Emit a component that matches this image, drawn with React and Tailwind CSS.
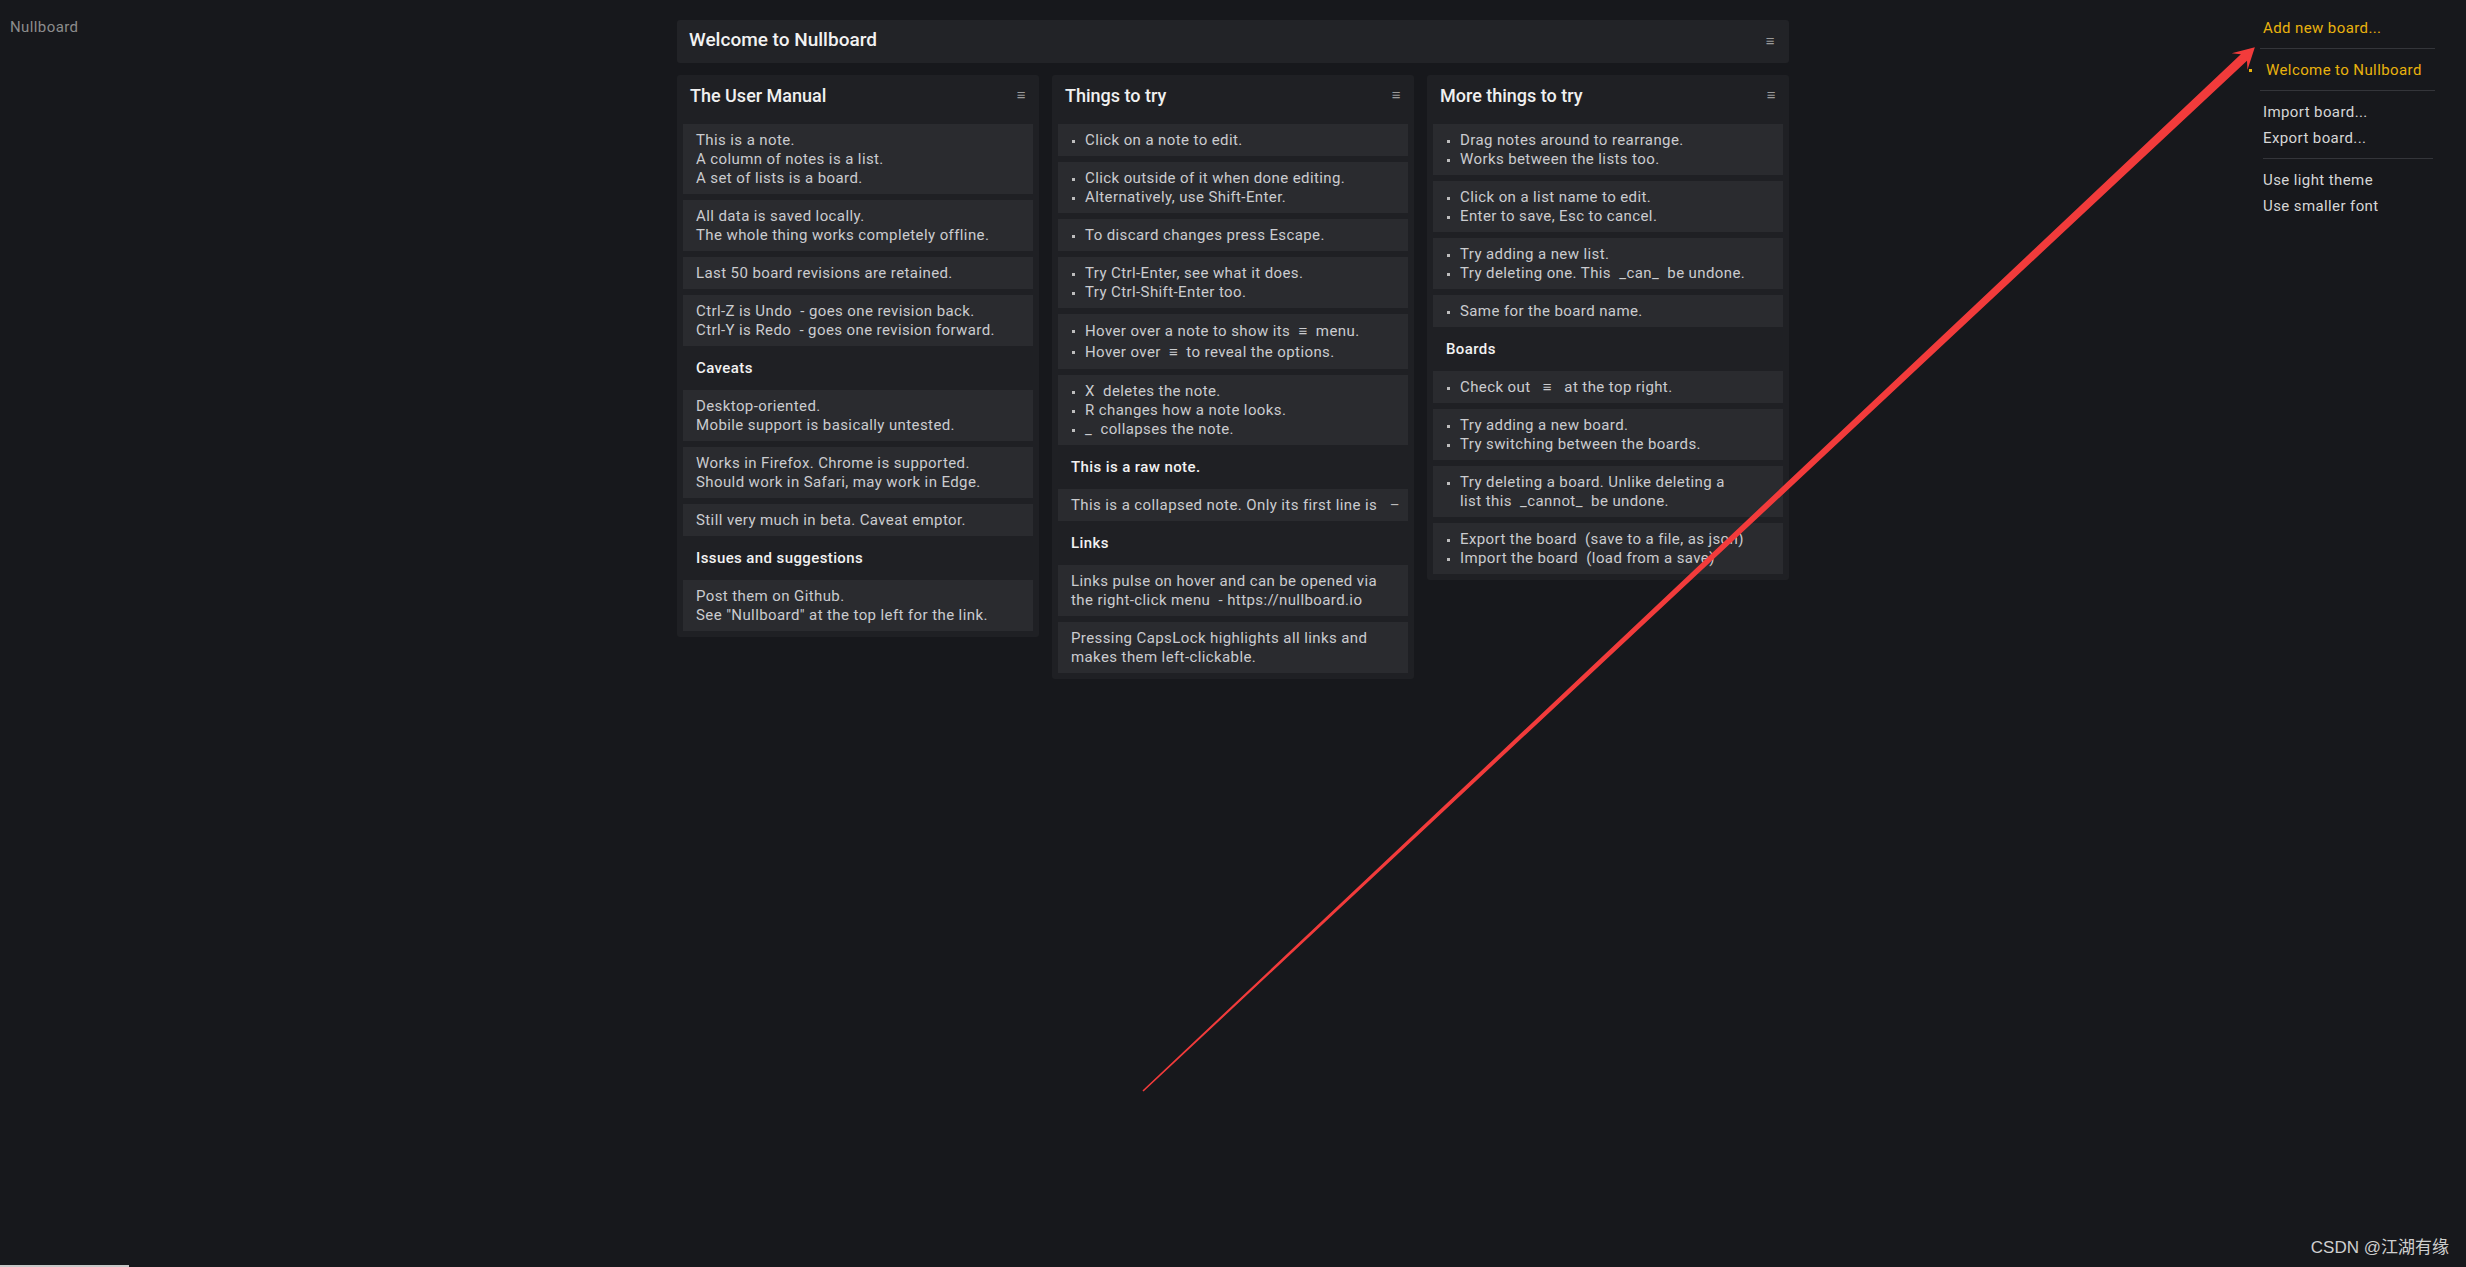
import React from "react";

// note kinds: plain text lines, bullet lines, raw (bold, no background), collapsed
const lists = [
  {
    title: "The User Manual",
    notes: [
      { lines: ["This is a note.", "A column of notes is a list.", "A set of lists is a board."] },
      { lines: ["All data is saved locally.", "The whole thing works completely offline."] },
      { lines: ["Last 50 board revisions are retained."] },
      { lines: ["Ctrl-Z is Undo  - goes one revision back.", "Ctrl-Y is Redo  - goes one revision forward."] },
      { raw: "Caveats" },
      { lines: ["Desktop-oriented.", "Mobile support is basically untested."] },
      { lines: ["Works in Firefox. Chrome is supported.", "Should work in Safari, may work in Edge."] },
      { lines: ["Still very much in beta. Caveat emptor."] },
      { raw: "Issues and suggestions" },
      { lines: ["Post them on Github.", 'See "Nullboard" at the top left for the link.'] },
    ],
  },
  {
    title: "Things to try",
    notes: [
      { bullets: ["Click on a note to edit."] },
      { bullets: ["Click outside of it when done editing.", "Alternatively, use Shift-Enter."] },
      { bullets: ["To discard changes press Escape."] },
      { bullets: ["Try Ctrl-Enter, see what it does.", "Try Ctrl-Shift-Enter too."] },
      { bullets: ["Hover over a note to show its  \u2261  menu.", "Hover over  \u2261  to reveal the options."], tall: true },
      { bullets: ["X  deletes the note.", "R changes how a note looks.", "_  collapses the note."] },
      { raw: "This is a raw note." },
      { collapsed: "This is a collapsed note. Only its first line is" },
      { raw: "Links" },
      { lines: ["Links pulse on hover and can be opened via", "the right-click menu  - https://nullboard.io"] },
      { lines: ["Pressing CapsLock highlights all links and", "makes them left-clickable."] },
    ],
  },
  {
    title: "More things to try",
    notes: [
      { bullets: ["Drag notes around to rearrange.", "Works between the lists too."] },
      { bullets: ["Click on a list name to edit.", "Enter to save, Esc to cancel."] },
      { bullets: ["Try adding a new list.", "Try deleting one. This  _can_  be undone."] },
      { bullets: ["Same for the board name."] },
      { raw: "Boards" },
      { bullets: ["Check out   \u2261   at the top right."] },
      { bullets: ["Try adding a new board.", "Try switching between the boards."] },
      { bullets: ["Try deleting a board. Unlike deleting a\nlist this  _cannot_  be undone."] },
      { bullets: ["Export the board  (save to a file, as json)", "Import the board  (load from a save)"] },
    ],
  },
];

function Note({ note }) {
  if (note.raw) {
    return (
      <div className="px-[13px] py-[6.5px] leading-[19px] font-medium text-[#f2f2f2]">
        {note.raw}
      </div>
    );
  }
  if (note.collapsed) {
    return (
      <div className="flex items-center justify-between bg-[#2a2b2f] pl-[13px] pr-[8px] py-[6.5px] leading-[19px] text-[#cbcccf]">
        <span className="whitespace-nowrap">{note.collapsed}</span>
        <span className="text-[#bbbbbb]">–</span>
      </div>
    );
  }
  return (
    <div className="bg-[#2a2b2f] px-[13px] py-[6.5px] leading-[19px] text-[#cbcccf]">
      {note.lines &&
        note.lines.map((l, i) => (
          <div key={i} className="whitespace-pre">
            {l}
          </div>
        ))}
      {note.bullets &&
        note.bullets.map((l, i) => (
          <div key={i} className={`flex items-start ${note.tall ? "leading-[21px]" : ""}`}>
            <span className="w-[14px] shrink-0 pt-[9px]">
              <span className="block ml-[1px] w-[3px] h-[3px] bg-[#bdbdbd]" />
            </span>
            <span className="whitespace-pre">{l}</span>
          </div>
        ))}
    </div>
  );
}

function List({ list }) {
  return (
    <div className="w-[362px] bg-[#1f2024] rounded-[3px] px-[6px] pt-[7px] pb-[6px]">
      <div className="h-[26px] mb-[16px] flex items-center justify-between px-[7px]">
        <span className="text-[18px] font-medium tracking-normal text-[#f0f0f0]">{list.title}</span>
        <span className="text-[15px] text-[#9a9a9a]">≡</span>
      </div>
      <div className="flex flex-col gap-[6px]">
        {list.notes.map((n, i) => (
          <Note key={i} note={n} />
        ))}
      </div>
    </div>
  );
}

export default function App() {
  return (
    <div className="relative min-h-screen overflow-hidden bg-[#17181c] font-['Roboto',sans-serif] text-[15px] tracking-[0.4px]">
      <div className="grid grid-cols-[1fr_1112px_1fr]">
        {/* logo */}
        <div className="pl-[10px] pt-[17px] text-[#8c8c8c] leading-[20px]">Nullboard</div>

        {/* board */}
        <div className="pt-[20px]">
          <div className="h-[43px] bg-[#222327] rounded-[3px] flex items-center justify-between pl-[12px] pr-[14px]">
            <span className="text-[19px] font-medium tracking-normal text-[#f2f2f2] -mt-[2px]">Welcome to Nullboard</span>
            <span className="text-[15px] text-[#9a9a9a]">≡</span>
          </div>
          <div className="mt-[12px] flex items-start gap-[13px]">
            {lists.map((l, i) => (
              <List key={i} list={l} />
            ))}
          </div>
        </div>

        {/* board menu */}
        <div className="flex justify-end pr-[31px] pt-[15px]">
          <div className="w-[175px] leading-[26px]">
            <div className="pl-[3px] text-[#e9b20e]">Add new board...</div>
            <div className="mt-[7px] mb-[8px] h-px bg-[#34353a]" />
            <div className="flex items-center -ml-[11px] text-[#e9b20e]">
              <span className="w-[3px] h-[3px] bg-[#e9b20e]" />
              <span className="ml-[14px]">Welcome to Nullboard</span>
            </div>
            <div className="mt-[7px] mb-[8px] h-px bg-[#34353a]" />
            <div className="pl-[3px] text-[#d6d6d6]">Import board...</div>
            <div className="pl-[3px] text-[#d6d6d6]">Export board...</div>
            <div className="mt-[7px] mb-[8px] ml-[3px] mr-[2px] h-px bg-[#34353a]" />
            <div className="pl-[3px] text-[#d6d6d6]">Use light theme</div>
            <div className="pl-[3px] text-[#d6d6d6]">Use smaller font</div>
          </div>
        </div>
      </div>

      {/* red annotation arrow */}
      <svg className="pointer-events-none absolute left-0 top-0" width="2466" height="1267">
        <g transform="translate(1143 1091) rotate(-43.19)">
          <polygon
            points="0,-0.8 1510,-4.5 1504,-11.5 1525,0 1504,11.5 1510,4.5 0,0.8"
            fill="#f23b3b"
          />
        </g>
      </svg>

      {/* watermark */}
      <div className="absolute right-[17px] bottom-[7px] text-[17px] tracking-normal text-[#cfcfcf] font-['Liberation_Sans','Noto_Sans_CJK_SC',sans-serif]">
        CSDN @江湖有缘
      </div>
      <div className="absolute left-0 bottom-0 w-[129px] h-[2px] bg-[#c8c8c8]" />
    </div>
  );
}
